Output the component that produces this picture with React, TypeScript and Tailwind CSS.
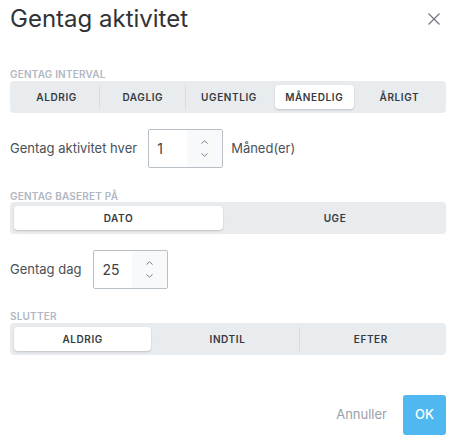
import React from 'react';

const font = { fontFamily: 'Inter, "Noto Sans", sans-serif' };

function Segmented({ items, active }: { items: string[]; active: number }) {
  return (
    <div className="flex h-[32px] rounded-[4px] bg-[#e9ecef] p-[4px]">
      {items.map((label, i) => {
        const selected = i === active;
        const showDivider = i > 0 && i !== active && i - 1 !== active;
        return (
          <div key={label} className={`flex flex-1 ${showDivider ? 'border-l border-[#d8dce0]' : ''}`}>
            <div
              className={`flex flex-1 items-center justify-center text-[10px] font-semibold tracking-[0.06em] text-[#343a40] ${
                selected ? `rounded-[4px] bg-white shadow-[0_1px_2px_rgba(0,0,0,0.18)] ${i === 0 ? 'mr-[5px]' : 'mx-[3px]'}` : ''
              }`}
            >
              {label}
            </div>
          </div>
        );
      })}
    </div>
  );
}

function NumberInput({ value }: { value: string }) {
  return (
    <div className="flex h-[39px] w-[75px] rounded-[2px] border border-[#b9bfc6] bg-white">
      <div className="flex flex-1 items-center pl-[8px] text-[14px] text-[#3d4247]">{value}</div>
      <div className="flex w-[35px] flex-col items-center justify-center gap-[9px] bg-[#f8f9fa]">
        <svg width="7" height="4" viewBox="0 0 7 4" fill="none" stroke="#7a8087" strokeWidth="1">
          <path d="M0.5 3.5L3.5 0.8L6.5 3.5" />
        </svg>
        <svg width="7" height="4" viewBox="0 0 7 4" fill="none" stroke="#7a8087" strokeWidth="1">
          <path d="M0.5 0.5L3.5 3.2L6.5 0.5" />
        </svg>
      </div>
    </div>
  );
}

function Label({ children, className }: { children: React.ReactNode; className: string }) {
  return (
    <div className={`text-[10px] font-semibold leading-[12px] tracking-[0.02em] text-[#b0b7c2] ${className}`}>
      {children}
    </div>
  );
}

export default function App() {
  return (
    <div className="h-[443px] w-[461px] bg-white pl-[10px] pr-[15px]" style={font}>
      {/* Header */}
      <div className="flex items-start justify-between pt-[5px]">
        <h1 className="text-[24px] leading-[28px] text-[#2f3337]">Gentag aktivitet</h1>
        <svg className="mr-[6px] mt-[8px]" width="12" height="12" viewBox="0 0 12 12" stroke="#6c7178" strokeWidth="1.1">
          <path d="M0.5 0.5L11.5 11.5M11.5 0.5L0.5 11.5" />
        </svg>
      </div>

      <Label className="mt-[35px]">GENTAG INTERVAL</Label>
      <div className="mt-[1px]">
        <Segmented items={['ALDRIG', 'DAGLIG', 'UGENTLIG', 'MÅNEDLIG', 'ÅRLIGT']} active={3} />
      </div>

      <div className="mt-[16px] flex items-center text-[13px] text-[#4a5057]">
        <span>Gentag aktivitet hver</span>
        <div className="ml-[11px] mr-[8px]">
          <NumberInput value="1" />
        </div>
        <span>Måned(er)</span>
      </div>

      <Label className="mt-[22px]">GENTAG BASERET PÅ</Label>
      <Segmented items={['DATO', 'UGE']} active={0} />

      <div className="mt-[16px] flex items-center text-[13px] text-[#4a5057]">
        <span>Gentag dag</span>
        <div className="ml-[12px]">
          <NumberInput value="25" />
        </div>
      </div>

      <Label className="mt-[21px]">SLUTTER</Label>
      <div className="mt-[1px]">
        <Segmented items={['ALDRIG', 'INDTIL', 'EFTER']} active={0} />
      </div>

      {/* Footer */}
      <div className="mt-[40px] flex items-center justify-end">
        <button className="mr-[16px] text-[13px] text-[#9aa1aa]">Annuller</button>
        <button className="h-[40px] w-[43px] rounded-[3px] bg-[#50b8f0] text-[13px] font-medium text-white">OK</button>
      </div>
    </div>
  );
}
